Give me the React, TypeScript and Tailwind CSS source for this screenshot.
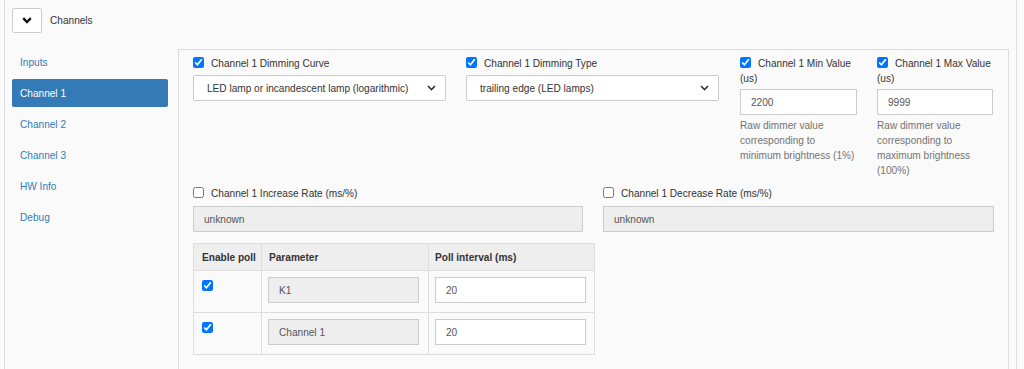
import React from "react";

const NAV = ["Inputs", "Channel 1", "Channel 2", "Channel 3", "HW Info", "Debug"];

function Check({ checked }: { checked?: boolean }) {
  return (
    <input
      type="checkbox"
      defaultChecked={checked}
      className="m-0 mr-[7px] inline-block h-[11px] w-[11px] align-[-1px] accent-[#0075ff]"
    />
  );
}

function Chevron() {
  return (
    <svg width="9" height="6" viewBox="0 0 9 6" className="shrink-0">
      <path d="M1 1l3.5 3.5L8 1" fill="none" stroke="#333" strokeWidth="1.6" />
    </svg>
  );
}

function FakeSelect({ value }: { value: string }) {
  return (
    <div className="mt-[4px] flex h-[26px] items-center justify-between rounded-[2px] border border-[#ccc] bg-white pl-[13px] pr-[9px] text-[#333]">
      <span>{value}</span>
      <Chevron />
    </div>
  );
}

function TextBox({ value, disabled, className = "" }: { value: string; disabled?: boolean; className?: string }) {
  return (
    <div
      className={`flex h-[26px] items-center border border-[#ccc] pl-[10px] text-[#555] ${
        disabled ? "bg-[#eee]" : "bg-white"
      } ${className}`}
    >
      {value}
    </div>
  );
}

export default function App() {
  return (
    <div
      className="min-h-screen bg-[#fafafa] text-[10.1px] leading-[15px] text-[#333]"
      style={{ fontFamily: '"Liberation Sans", Arial, sans-serif' }}
    >
      <div className="ml-[4px] min-h-screen w-[1013px] border-x border-[#ddd] px-[7px] pt-[8px]">
        <div className="flex h-[25px] items-center">
          <div className="flex h-[25px] w-[30px] items-center justify-center rounded-[2px] border border-[#ccc] bg-white">
            <svg width="10" height="7" viewBox="0 0 10 7">
              <path d="M1.2 1.2L5 5l3.8-3.8" fill="none" stroke="#111" strokeWidth="2.4" />
            </svg>
          </div>
          <span className="ml-[8px]">Channels</span>
        </div>

        <div className="mt-[15px] flex gap-[10px]">
          <nav className="flex w-[156px] flex-col gap-[3px]">
            {NAV.map((item) => (
              <div
                key={item}
                className={`flex h-[28px] items-center rounded-[2px] px-[8px] ${
                  item === "Channel 1" ? "bg-[#337ab7] text-white" : "text-[#337ab7]"
                }`}
              >
                {item}
              </div>
            ))}
          </nav>

          <div className="mt-[1px] w-[831px] border border-[#ddd] pb-[20px] pl-[14px] pr-[14px] pt-[6px]">
            <div className="flex gap-x-[20px]">
              <div className="w-[253px]">
                <label className="block">
                  <Check checked />
                  Channel 1 Dimming Curve
                </label>
                <FakeSelect value="LED lamp or incandescent lamp (logarithmic)" />
              </div>
              <div className="w-[253px]">
                <label className="block">
                  <Check checked />
                  Channel 1 Dimming Type
                </label>
                <FakeSelect value="trailing edge (LED lamps)" />
              </div>
              <div className="ml-[1px] w-[117px]">
                <label className="block">
                  <Check checked />
                  Channel 1 Min Value (us)
                </label>
                <TextBox value="2200" className="mt-[3px] h-[25px]" />
                <p className="mt-[3px] text-[#737373]">
                  Raw dimmer value corresponding to minimum brightness (1%)
                </p>
              </div>
              <div className="w-[116px]">
                <label className="block">
                  <Check checked />
                  Channel 1 Max Value (us)
                </label>
                <TextBox value="9999" className="mt-[3px] h-[25px]" />
                <p className="mt-[3px] text-[#737373]">
                  Raw dimmer value corresponding to maximum brightness (100%)
                </p>
              </div>
            </div>

            <div className="mt-[8px] flex gap-x-[20px]">
              <div className="w-[390px]">
                <label className="block">
                  <Check />
                  Channel 1 Increase Rate (ms/%)
                </label>
                <TextBox value="unknown" disabled className="mt-[5px]" />
              </div>
              <div className="w-[391px]">
                <label className="block">
                  <Check />
                  Channel 1 Decrease Rate (ms/%)
                </label>
                <TextBox value="unknown" disabled className="mt-[5px]" />
              </div>
            </div>

            <table className="mt-[11px] w-[402px] border-collapse border border-[#ddd]">
              <thead>
                <tr className="h-[27px] bg-[#eee] text-left font-bold">
                  <th className="w-[68px] border border-[#ddd] pl-[8px]">Enable poll</th>
                  <th className="w-[167px] border border-[#ddd] pl-[7px]">Parameter</th>
                  <th className="border border-[#ddd] pl-[6px]">Poll interval (ms)</th>
                </tr>
              </thead>
              <tbody>
                {["K1", "Channel 1"].map((p) => (
                  <tr key={p} className="h-[42px]">
                    <td className="border border-[#ddd] pl-[8px] pt-[9px] align-top">
                      <input
                        type="checkbox"
                        defaultChecked
                        className="m-0 block h-[11px] w-[11px] accent-[#0075ff]"
                      />
                    </td>
                    <td className="border border-[#ddd] pl-[6px] pr-[9px] pt-[6px] align-top">
                      <TextBox value={p} disabled className="h-[25px]" />
                    </td>
                    <td className="border border-[#ddd] pl-[6px] pr-[8px] pt-[6px] align-top">
                      <TextBox value="20" className="h-[25px]" />
                    </td>
                  </tr>
                ))}
              </tbody>
            </table>
          </div>
        </div>
      </div>
    </div>
  );
}
